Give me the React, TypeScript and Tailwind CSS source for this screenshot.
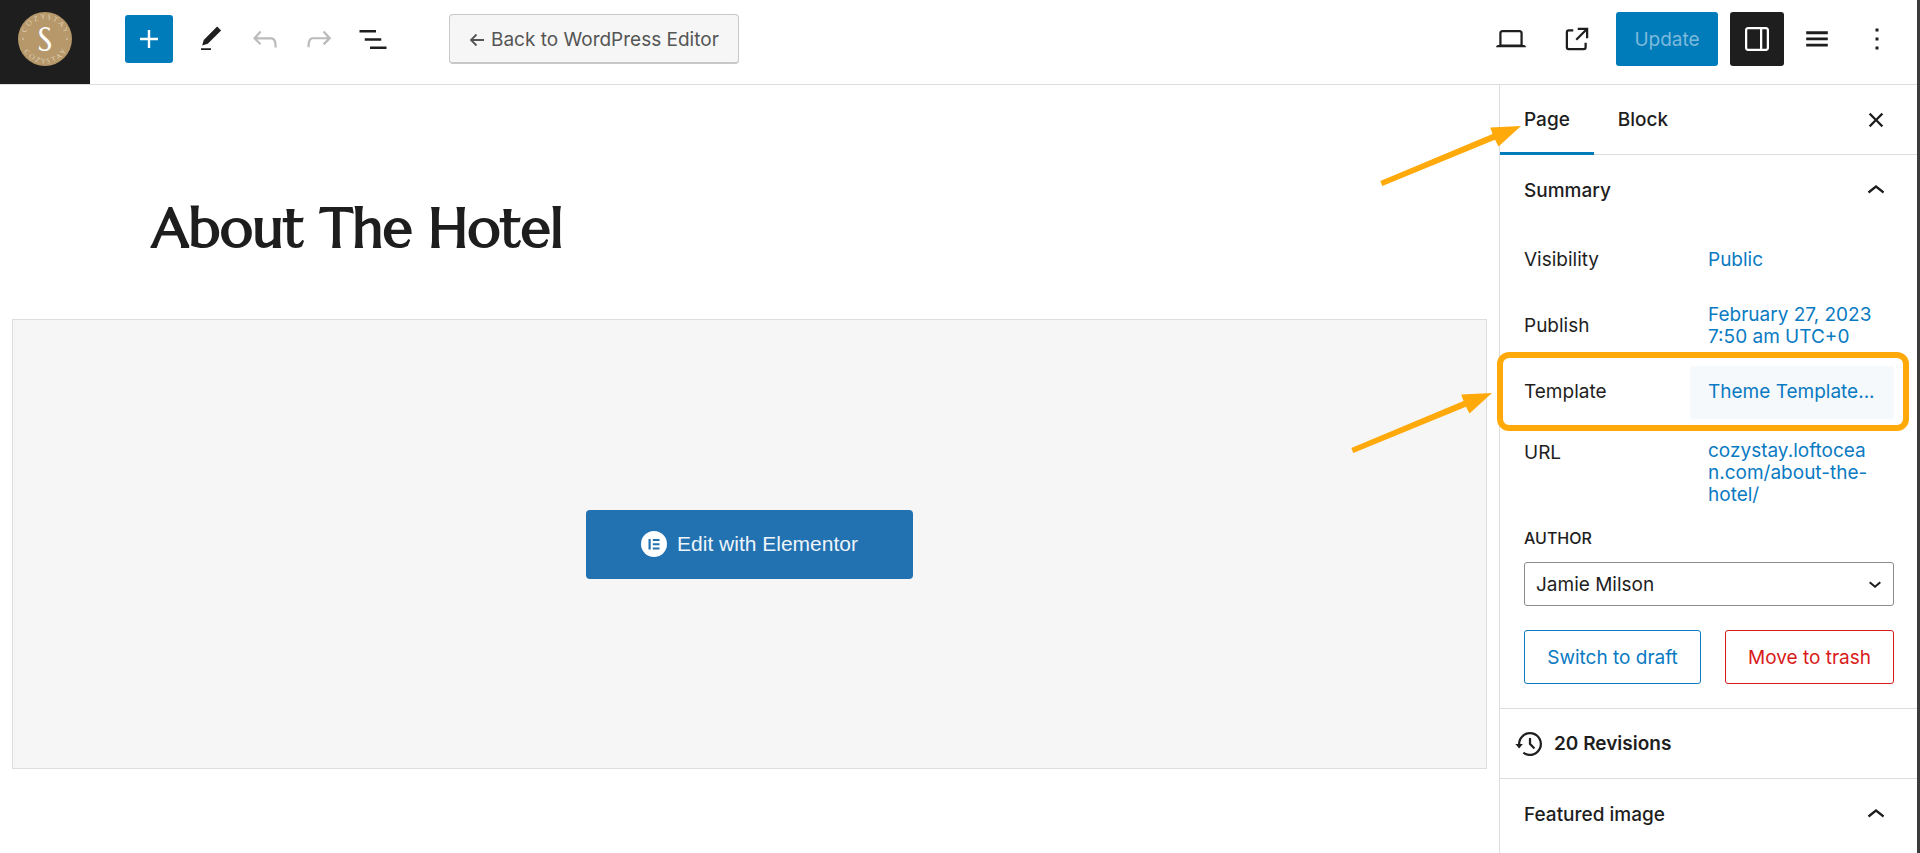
import { useState } from "react";

const ICONS = {
  plus: "M18 11.2h-5.2V6h-1.6v5.2H6v1.6h5.2V18h1.6v-5.2H18z",
  pencil: "M20.1 5.1L16.9 2 6.2 12.7l-1.3 4.4 4.5-1.3L20.1 5.1zM4 20.8h8v-1.5H4v1.5z",
  undo: "M18.3 11.7c-.6-.6-1.4-.9-2.3-.9H6.7l2.9-3.3-1.1-1-4.5 5L8.5 16l1-1-2.7-2.7H16c.5 0 .9.2 1.3.5 1 1 1 3.4 1 4.5v.3h1.5v-.2c0-1.5 0-4.3-1.5-5.7z",
  redo: "M15.6 6.5l-1.1 1 2.9 3.3H8c-.9 0-1.7.3-2.3.9-1.4 1.5-1.4 4.2-1.4 5.6v.2h1.5v-.3c0-1.1 0-3.5 1-4.5.3-.3.7-.5 1.3-.5h9.2L14.5 15l1.1 1.1 4.6-4.6-4.6-5z",
  listView: "M3 6h11v1.6H3V6zm3.5 5.5h11v1.6h-11v-1.6zM21 17H10v1.6h11V17z",
  laptop: "M20.5 16h-.7V8c0-1.1-.9-2-2-2H6.2c-1.1 0-2 .9-2 2v8h-.7c-.8 0-1.5.7-1.5 1.5h20c0-.8-.7-1.5-1.5-1.5zM5.7 8c0-.3.2-.5.5-.5h11.6c.3 0 .5.2.5.5v7.6H5.7V8z",
  external: "M19.5 4.5h-7V6h4.44l-5.97 5.97 1.06 1.06L18 7.06v4.44h1.5v-7Zm-13 1a2 2 0 0 0-2 2v10a2 2 0 0 0 2 2h10a2 2 0 0 0 2-2v-3H17v3a.5.5 0 0 1-.5.5h-10a.5.5 0 0 1-.5-.5v-10a.5.5 0 0 1 .5-.5h3V5.5h-3Z",
  drawer: "M18 4H6c-1.1 0-2 .9-2 2v12c0 1.1.9 2 2 2h12c1.1 0 2-.9 2-2V6c0-1.1-.9-2-2-2zm-4 14.5H6c-.3 0-.5-.2-.5-.5V6c0-.3.2-.5.5-.5h8v13zm4.5-.5c0 .3-.2.5-.5.5h-2.5v-13H18c.3 0 .5.2.5.5v12z",
  menu: "M4.8 6.9h14.4v1.9H4.8zM4.8 11h14.4v1.9H4.8zM4.8 15.1h14.4V17H4.8z",
  more: "M13 19h-2v-2h2v2zm0-6h-2v-2h2v2zm0-6h-2V5h2v2z",
  close: "M12 13.06l3.712 3.713 1.061-1.06L13.061 12l3.712-3.712-1.06-1.06L12 10.938 8.288 7.227l-1.061 1.06L10.939 12l-3.712 3.712 1.06 1.061L12 13.061z",
  chevronUp: "M6.5 12.4L12 8l5.5 4.4-.9 1.2L12 10l-4.5 3.6-1-1.2z",
  backup: "M5.5 12h1.75l-2.5 3-2.5-3H4a8 8 0 113.134 6.35l.907-1.194A6.5 6.5 0 105.5 12zm9.53 1.97l-2.28-2.28V8.5a.75.75 0 00-1.5 0V12a.747.747 0 00.218.529l2.5 2.5a.75.75 0 101.06-1.061z",
};

function Icon({ name, className = "size-9" }: { name: keyof typeof ICONS; className?: string }) {
  return (
    <svg viewBox="0 0 24 24" fill="currentColor" className={`shrink-0 ${className}`} aria-hidden="true">
      <path d={ICONS[name]} />
    </svg>
  );
}

function ToolButton({ name, label, iconClass, disabled }: {
  name: keyof typeof ICONS;
  label: string;
  iconClass?: string;
  disabled?: boolean;
}) {
  return (
    <button
      type="button"
      aria-label={label}
      disabled={disabled}
      className="flex h-12 w-[54px] items-center justify-center disabled:text-[#bbb]"
    >
      <Icon name={name} className={iconClass} />
    </button>
  );
}

function SiteLogo() {
  return (
    <a href="#dashboard" aria-label="View Pages" className="flex w-[90px] shrink-0 items-center justify-center bg-[#1e1e1e] pb-[6px]">
      <svg viewBox="0 0 54 54" className="size-[54px]">
        <defs>
          <path id="ring-top" d="M7 27a20 20 0 0 1 40 0" />
          <path id="ring-bottom" d="M2.5 27a24.500 24.500 0 0 0 49 0" />
        </defs>
        <circle cx="27" cy="27" r="27" fill="#b6986a" />
        <g fill="#e4d6bd" fontFamily="Marcellus, Lato, serif" fontSize="7" textAnchor="middle">
          <text><textPath href="#ring-top" startOffset="50%">C O Z Y S T A Y</textPath></text>
          <text><textPath href="#ring-bottom" startOffset="50%">C O Z Y S T A Y</textPath></text>
          <text x="27" y="39" fill="#fff" fontSize="34">S</text>
        </g>
        <circle cx="5" cy="27" r="0.8" fill="#e4d6bd" />
        <circle cx="49" cy="27" r="0.8" fill="#e4d6bd" />
      </svg>
    </a>
  );
}

function Header() {
  return (
    <header className="flex h-[85px] border-b border-[#ddd]">
      <SiteLogo />
      <div className="flex flex-1 items-center justify-between pr-[13px] pb-[6px] pl-[35px]">
        <div className="flex items-center">
          <button type="button" aria-label="Add block" className="mr-[11px] flex size-12 items-center justify-center rounded-[3px] bg-[#007cba] text-white">
            <Icon name="plus" />
          </button>
          <ToolButton name="pencil" label="Tools" iconClass="size-[30px]" />
          <ToolButton name="undo" label="Undo" disabled />
          <ToolButton name="redo" label="Redo" disabled />
          <ToolButton name="listView" label="List View" />
          <button
            type="button"
            className="ml-[49px] flex h-[50px] items-center gap-[6px] rounded-[4px] border border-b-2 border-[#c8c8c8] bg-[#f6f6f6] px-[19px] pt-[3px] text-[#555]"
          >
            <svg viewBox="0 0 16 16" className="size-4" fill="none" stroke="currentColor" strokeWidth="1.8" aria-hidden="true">
              <path d="M15 8H2M7.5 2.5L2 8l5.5 5.5" />
            </svg>
            Back to WordPress Editor
          </button>
        </div>
        <div className="flex items-center">
          <ToolButton name="laptop" label="Preview" />
          <div className="w-3" />
          <ToolButton name="external" label="View Page" />
          <button type="button" disabled className="ml-3 h-[54px] w-[102px] rounded-[3px] bg-[#007cba] pt-[2px] text-[#7db9dc]">
            Update
          </button>
          <button type="button" aria-label="Settings" className="mx-3 flex size-[54px] items-center justify-center rounded-[3px] bg-[#1e1e1e] text-white">
            <Icon name="drawer" />
          </button>
          <div className="-ml-[6px] flex gap-[6px]">
            <ToolButton name="menu" label="Structure" />
            <ToolButton name="more" label="Options" />
          </div>
        </div>
      </div>
    </header>
  );
}

function Canvas() {
  return (
    <main className="flex-1 px-3 pt-[105px]">
      <h1 className="pl-[140px] font-['Marcellus','Liberation_Serif',serif] text-[54px] leading-[76px] text-[#1e1e1e] [-webkit-text-stroke:2px_#1e1e1e]">
        About The Hotel
      </h1>
      <div className="mt-[53px] flex h-[450px] items-center justify-center border border-[#ddd] bg-[#f6f6f6]">
        <button
          type="button"
          className="flex h-[69px] w-[327px] items-center justify-center gap-[10px] rounded-[4px] bg-[#2271b1] font-['Liberation_Sans',sans-serif] text-[21px] text-[#eef5fa]"
        >
          <svg viewBox="0 0 26 26" className="size-[26px]" aria-hidden="true">
            <circle cx="13" cy="13" r="13" fill="#fff" />
            <path d="M7.5 8h2.2v10.5H7.5zM11.8 8h6.7v2.1h-6.7zM11.8 12.2h6.7v2.1h-6.7zM11.8 16.4h6.7v2.1h-6.7z" fill="#2271b1" />
          </svg>
          Edit with Elementor
        </button>
      </div>
    </main>
  );
}

function PanelTitle({ children }: { children: string }) {
  return (
    <h2>
      <button type="button" aria-expanded="true" className="flex h-[72px] w-full items-center justify-between pr-[23px] pl-6 font-medium">
        {children}
        <Icon name="chevronUp" />
      </button>
    </h2>
  );
}

function Arrow({ className }: { className: string }) {
  return (
    <svg viewBox="0 0 142 62" className={`pointer-events-none absolute z-10 h-[62px] w-[142px] ${className}`} aria-hidden="true">
      <path d="M1.3 57L113.500 10l-2.300-6.500L142 2l-22.500 20.500-3.500-6.800L3.300 62z" fill="#ffa90a" />
    </svg>
  );
}

function Sidebar() {
  const [tab, setTab] = useState("Page");
  const [author, setAuthor] = useState("Jamie Milson");

  return (
    <aside className="relative w-[418px] shrink-0 border-l border-[#ddd]">
      <Arrow className="top-[39px] -left-[121px]" />
      <Arrow className="top-[306px] -left-[150px]" />
      <div className="flex h-[70px] items-stretch justify-between border-b border-[#ddd] pr-[23px]">
        <div className="flex" role="tablist">
          {["Page", "Block"].map((t) => (
            <button
              key={t}
              type="button"
              role="tab"
              aria-selected={tab === t}
              onClick={() => setTab(t)}
              className={`-mb-px border-b-[3px] px-6 pt-1 font-medium ${tab === t ? "border-[#007cba]" : "border-transparent"}`}
            >
              {t}
            </button>
          ))}
        </div>
        <button type="button" aria-label="Close settings">
          <Icon name="close" />
        </button>
      </div>

      <section className="border-b border-[#ddd] pb-6">
        <PanelTitle>Summary</PanelTitle>
        <div className="pr-[23px] pl-6">
          <div className="flex h-[66px] items-center">
            <span className="w-[184px]">Visibility</span>
            <a href="#visibility" className="text-[#0a7ac2]">Public</a>
          </div>
          <div className="flex h-[66px] items-center">
            <span className="w-[184px]">Publish</span>
            <a href="#publish" className="leading-[22px] text-[#0a7ac2]">
              February 27, 2023
              <br />
              7:50 am UTC+0
            </a>
          </div>
          <div className="relative flex h-[66px] items-center">
            <span className="w-[166px]">Template</span>
            <button type="button" className="h-[53px] flex-1 rounded-[3px] bg-[#f5f9fc] pl-[18px] text-left text-[#0a7ac2]">
              Theme Template...
            </button>
            <div className="pointer-events-none absolute -top-[7px] -right-[15px] -bottom-[6px] -left-[27px] rounded-xl border-[6px] border-[#ffa90a]" />
          </div>
          <div className="flex pt-[15px]">
            <span className="w-[184px] leading-[26px]">URL</span>
            <a href="#url" className="leading-[22px] text-[#0a7ac2]">
              cozystay.loftocea
              <br />
              n.com/about-the-
              <br />
              hotel/
            </a>
          </div>
          <label htmlFor="author" className="mt-5 block text-[16px] leading-6 font-medium">
            AUTHOR
          </label>
          <div className="relative mt-3">
            <select
              id="author"
              value={author}
              onChange={(e) => setAuthor(e.target.value)}
              className="h-11 w-full appearance-none rounded-[3px] border border-[#8c8c8c] bg-white px-[11px] pt-[2px]"
            >
              <option>Jamie Milson</option>
            </select>
            <svg viewBox="0 0 12 8" className="pointer-events-none absolute top-[19px] right-[13px] h-2 w-3" fill="none" stroke="currentColor" strokeWidth="2" aria-hidden="true">
              <path d="M.7 1.2L6 5.8l5.300-4.600" />
            </svg>
          </div>
          <div className="mt-6 flex gap-6">
            <button type="button" className="h-[54px] w-[177px] rounded-[3px] border border-[#0a7ac2] pt-[2px] text-[#0a7ac2]">
              Switch to draft
            </button>
            <button type="button" className="h-[54px] flex-1 rounded-[3px] border border-[#d91a1a] pt-[2px] text-[#d91a1a]">
              Move to trash
            </button>
          </div>
        </div>
      </section>

      <section className="border-b border-[#ddd]">
        <button type="button" className="flex h-[69px] w-full items-center gap-[6px] pl-3 font-semibold">
          <Icon name="backup" />
          <span className="pt-[2px]">20 Revisions</span>
        </button>
      </section>

      <section>
        <PanelTitle>Featured image</PanelTitle>
      </section>
    </aside>
  );
}

export default function App() {
  return (
    <div className="flex min-h-screen flex-col border-r-3 border-[#3c3c3c] bg-white font-['Inter',sans-serif] text-[19px] text-[#1e1e1e]">
      <Header />
      <div className="flex flex-1">
        <Canvas />
        <Sidebar />
      </div>
    </div>
  );
}
